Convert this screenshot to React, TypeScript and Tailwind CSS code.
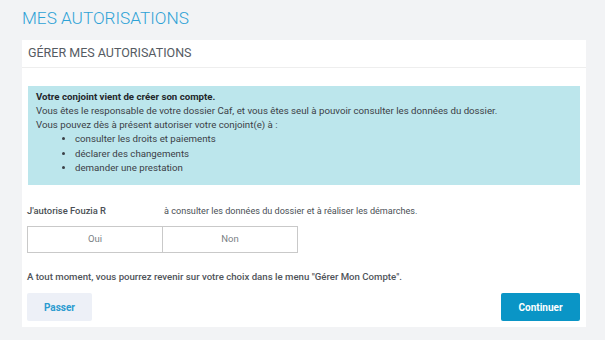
import React from "react";

const items = [
  "consulter les droits et paiements",
  "déclarer des changements",
  "demander une prestation",
];

const App: React.FC = () => {
  return (
    <div className="h-[340px] w-[605px] bg-[#f2f3f5] pl-[22px] pr-[19px] font-['Roboto',sans-serif]">
      {/* page title */}
      <h1 className="h-[40px] pt-[7px] text-[17.2px] leading-[22px] font-light text-[#2ea2d6]">
        MES AUTORISATIONS
      </h1>

      <div className="bg-white">
        {/* card header */}
        <div className="flex h-[28px] items-center border-b border-[#eeeeee] px-[6px]">
          <h2 className="text-[12.5px] text-[#555b63]">GÉRER MES AUTORISATIONS</h2>
        </div>

        <div className="px-[5px] pt-[18px] pb-[6px]">
          {/* info box */}
          <div className="mx-[1px] h-[99px] bg-[#bce6ec] px-[8px] pt-[3.5px] text-[9.7px] leading-[14.3px] text-[#3b4046]">
            <p className="font-bold text-[#23272b]">Votre conjoint vient de créer son compte.</p>
            <p>
              Vous êtes le responsable de votre dossier Caf, et vous êtes seul à pouvoir consulter les
              données du dossier.
            </p>
            <p>Vous pouvez dès à présent autoriser votre conjoint(e) à :</p>
            <ul className="list-disc pl-[39px]">
              {items.map((it) => (
                <li key={it}>{it}</li>
              ))}
            </ul>
          </div>

          {/* authorisation line */}
          <p className="mt-[19px] flex text-[9.1px] leading-[14px] text-[#4a4f55]">
            <span className="w-[137px] text-[9.4px] font-medium">J'autorise Fouzia R</span>
            <span>à consulter les données du dossier et à réaliser les démarches.</span>
          </p>

          <div className="mt-[8px] flex w-[271px]">
            <button className="h-[27px] flex-1 border border-[#c9c9c9] text-[9.5px] text-[#7a7f85]">
              Oui
            </button>
            <button className="h-[27px] flex-1 border border-l-0 border-[#c9c9c9] text-[9.5px] text-[#7a7f85]">
              Non
            </button>
          </div>

          <p className="mt-[17px] text-[9.65px] leading-[14px] font-medium text-[#4f545a]">
            A tout moment, vous pourrez revenir sur votre choix dans le menu "Gérer Mon Compte".
          </p>

          {/* actions */}
          <div className="mt-[9px] flex items-center justify-between pr-[1px]">
            <button className="h-[28px] w-[65px] rounded-[2px] bg-[#edf0f7] text-[10px] font-bold text-[#2b9bd0]">
              Passer
            </button>
            <button className="h-[28px] w-[79px] rounded-[2px] bg-[#0a95c6] text-[10px] font-bold text-white">
              Continuer
            </button>
          </div>
        </div>
      </div>
    </div>
  );
};

export default App;
